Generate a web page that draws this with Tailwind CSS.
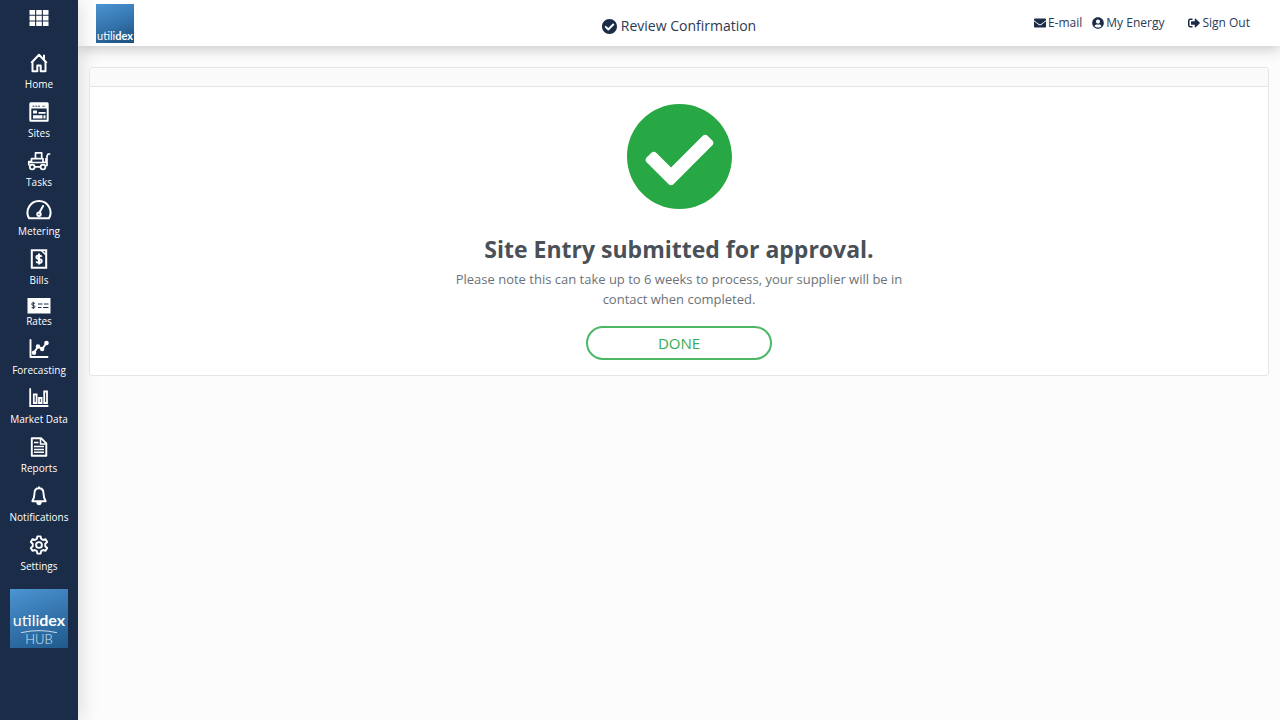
<!DOCTYPE html>
<html lang="en">
<head>
<meta charset="utf-8">
<meta name="viewport" content="width=device-width, initial-scale=1">
<title>Review Confirmation</title>
<script src="https://cdn.jsdelivr.net/npm/@tailwindcss/browser@4"></script>
</head>
<body class="flex min-h-screen bg-[#fcfcfc] font-['Open_Sans','Noto_Sans',sans-serif] text-[#1b2c48]">

<aside class="relative z-10 flex w-[78px] shrink-0 flex-col items-center bg-[#1b2c48] text-white shadow-[4px_0_18px_rgba(0,0,0,0.12)]">
  <button type="button" aria-label="Apps" class="mt-2.5 h-4 w-5">
    <svg viewBox="0 0 20 16" class="h-4 w-5" fill="currentColor"><path d="M.5 0h5.600v4.700H.5zM7.200 0h5.600v4.700H7.200zM13.900 0h5.600v4.700h-5.600zM.5 5.700h5.600v4.700H.5zM7.200 5.700h5.600v4.700H7.200zM13.900 5.700h5.600v4.700h-5.600zM.5 11.400h5.600V16H.5zM7.200 11.400h5.600V16H7.200zM13.900 11.400h5.600V16h-5.600z"/></svg>
  </button>
  <nav aria-label="Main" class="mt-[27px] flex flex-col items-center gap-[11px] text-[10px] leading-[14px]">
    <a href="#" class="flex flex-col items-center gap-1">
      <svg viewBox="0 0 24 20" class="h-5 w-6" fill="none" stroke="currentColor" stroke-width="2" stroke-linejoin="round"><path d="M5.500 8.500v9.800h4.800V12.500h3.400v5.800h4.800V8.500M4.200 10 12 1.700 19.800 10M17 1.800v5"/></svg>
      Home</a>
    <a href="#" class="flex flex-col items-center gap-1">
      <svg viewBox="0 0 24 20" class="h-5 w-6"><rect x="3.300" y="1.300" width="17.400" height="17.400" rx=".5" fill="none" stroke="currentColor" stroke-width="2"/><path d="M4 2h16v4.500H4zM6 8.500h4v3H6zM11.500 10h7v1.700h-7zM6 13.300h9.500v3.200H6zM16.500 13.300h2v3.200h-2z" fill="currentColor"/><path d="M5.500 4.200h8M15.500 4.200h3" stroke="#1b2c48" stroke-dasharray="2 .8" stroke-width=".9"/></svg>
      Sites</a>
    <a href="#" class="flex flex-col items-center gap-1">
      <svg viewBox="0 0 24 20" class="h-5 w-6" fill="none" stroke="currentColor" stroke-width="1.700" stroke-linejoin="round"><path d="M8.500 8V1.800h6.200V8M1.800 14.500V10.500H4.500V7.700H16v3.600H19V7M7.500 15.800h6M1.500 11.500H19M18.700 14.500h1.300V5.200L21 3h2.300"/><circle cx="5.200" cy="16" r="2.400"/><circle cx="16" cy="16" r="2.400"/></svg>
      Tasks</a>
    <a href="#" class="flex flex-col items-center gap-1">
      <svg viewBox="0 0 26 20" class="h-5 w-[26px]" fill="none" stroke="currentColor" stroke-width="2" stroke-linejoin="round" stroke-linecap="round"><path d="M3 18.300a11.500 11.500 0 1 1 20 0z"/><path d="m13.500 12.500 3.500-6.500"/><circle cx="13" cy="14.200" r="1.700"/></svg>
      Metering</a>
    <a href="#" class="flex flex-col items-center gap-1">
      <svg viewBox="0 0 24 20" class="h-5 w-6" fill="none" stroke="currentColor" stroke-width="2"><path d="M4.800 1.300h14.400v17.400H4.800z"/><path d="M14.500 1.500 19 6" stroke-width="1.500"/><path d="M14.700 7.700c-.5-1-1.500-1.300-2.700-1.300-1.500 0-2.600.6-2.600 1.800 0 2.700 5.300 1 5.300 3.700 0 1.200-1.200 1.900-2.700 1.900-1.300 0-2.300-.5-2.700-1.500M12 4.500v11"/></svg>
      Bills</a>
    <a href="#" class="flex flex-col items-center">
      <svg viewBox="0 0 24 16" class="h-4 w-6"><path d="M.5 0h23v15.500H.5z" fill="currentColor"/><path d="M7.900 5.800c-.3-.7-.9-.9-1.600-.9-.9 0-1.600.4-1.600 1.200 0 1.700 3.300.8 3.300 2.500 0 .8-.7 1.300-1.700 1.300-.8 0-1.500-.3-1.700-1M6.300 3.800v7.200M11 6h4.500M17 6h4.500M11 9.500h3.500M16 9.500h5.500" fill="none" stroke="#1b2c48" stroke-width="1"/></svg>
      Rates</a>
    <a href="#" class="flex flex-col items-center gap-1">
      <svg viewBox="0 0 24 20" class="h-5 w-6" fill="none" stroke="currentColor" stroke-width="1.900" stroke-linecap="round" stroke-linejoin="round"><path d="M3.500 1v17h17M7 13.700 11 7.500l4.200 2.500L19.500 4"/><g fill="currentColor" stroke="none"><circle cx="7" cy="13.700" r="2.200"/><circle cx="11" cy="7.500" r="2.200"/><circle cx="15.200" cy="10" r="2.200"/><circle cx="19.500" cy="4" r="2.300"/></g></svg>
      Forecasting</a>
    <a href="#" class="flex flex-col items-center gap-1">
      <svg viewBox="0 0 24 20" class="h-5 w-6" fill="none" stroke="currentColor" stroke-width="1.800" stroke-linecap="round"><path d="M3.200 1v17h17.500"/><path d="M6.800 6.500h2.800v8.500H6.800zM12 10h2.600v5H12zM17.200 3.500H20V15h-2.800z"/></svg>
      Market Data</a>
    <a href="#" class="flex flex-col items-center gap-1">
      <svg viewBox="0 0 24 20" class="h-5 w-6" fill="none" stroke="currentColor" stroke-width="1.900" stroke-linejoin="round"><path d="M4.800 1.300h9.500l5 5v12.400H4.800z"/><path d="M13.500 1.500V7h5.500M7 5.500h4.500M7 9.500h10M7 12.400h10M7 15.300h10" stroke-width="1.500"/></svg>
      Reports</a>
    <a href="#" class="flex flex-col items-center gap-1">
      <svg viewBox="0 0 24 20" class="h-5 w-6" fill="none" stroke="currentColor" stroke-width="1.900" stroke-linejoin="round"><path d="M12 2.300c-3.200 0-4.500 2.500-4.500 5 0 4-.8 5.700-2.200 8h13.400c-1.400-2.300-2.200-4-2.200-8 0-2.500-1.300-5-4.500-5zM12 .5v2"/><path d="M9.700 16.500h4.600a2.300 2.300 0 0 1-4.600 0z" fill="currentColor" stroke-width="1"/></svg>
      Notifications</a>
    <a href="#" class="flex flex-col items-center gap-1">
      <svg viewBox="1 1 22 22" class="h-5 w-6" fill="none" stroke="currentColor" stroke-width="2.100" stroke-linejoin="round"><path d="M9.600 5.300 10.200 2.500h3.600l.6 2.800 2.100 1.200 2.700-.9 1.800 3.100-2.100 1.900v2.800l2.100 1.900-1.800 3.100-2.700-.9-2.100 1.200-.6 2.800h-3.600l-.6-2.800-2.100-1.200-2.700.9L3 15.300l2.100-1.900v-2.800L3 8.700l1.800-3.100 2.700.9z"/><circle cx="12" cy="12" r="3.200"/></svg>
      Settings</a>
  </nav>
  <a href="#" aria-label="utilidex HUB" class="mt-4 mb-4 flex h-[59px] w-[58px] flex-col items-center bg-linear-160 from-[#4c94d3] via-[#3575ae] via-50% to-[#1f5a8c] pt-[21px] font-['Lato',sans-serif]">
    <span class="text-[16px] leading-[20px] font-normal">utili<b class="font-bold">dex</b></span>
    <svg viewBox="0 0 36 3" class="h-[3px] w-9 shrink-0" fill="none" stroke="#c5dcef"><path d="M0 2.700Q18-1.500 36 2.700"/></svg>
    <span class="text-[13px] leading-[12px] font-light text-[#d5e6f4]">HUB</span>
  </a>
</aside>

<div class="min-w-0 flex-1">
  <header class="grid h-[46px] grid-cols-[1fr_auto_1fr] bg-white shadow-[0_2px_14px_rgba(0,0,0,0.24)]">
    <a href="#" aria-label="utilidex" class="mt-1 ml-[18px] flex h-[39px] w-[38px] items-end justify-center bg-linear-160 from-[#4c94d3] via-[#3575ae] via-50% to-[#1c4f7e] font-['Lato',sans-serif] text-[11px] leading-[14px] text-white"><span>utili<b>dex</b></span></a>
    <h1 class="mt-[15px] flex items-start gap-1 text-[14px] leading-[22px] text-[#2c3b55]">
      <svg viewBox="8 8 496 496" class="mt-1 size-[15px] text-[#1b2c48]" fill="currentColor"><path d="M504 256c0 136.967-111.033 248-248 248S8 392.967 8 256 119.033 8 256 8s248 111.033 248 248zM227.314 387.314l184-184c6.248-6.248 6.248-16.379 0-22.627l-22.627-22.627c-6.248-6.249-16.379-6.249-22.628 0L216 308.118l-70.059-70.059c-6.248-6.248-16.379-6.248-22.628 0l-22.627 22.627c-6.248 6.248-6.248 16.379 0 22.627l104 104c6.249 6.249 16.379 6.249 22.628.001z"/></svg>
      Review Confirmation</h1>
    <nav aria-label="Account" class="mt-3.5 mr-[30px] flex items-start justify-end text-[12px] leading-[18px] whitespace-nowrap text-[#2c3b55]">
      <a href="#" class="mr-2.5 flex items-center gap-0.5"><svg viewBox="0 0 512 512" class="size-3 text-[#1b2c48]" fill="currentColor"><path d="M502.300 190.800c3.900-3.100 9.700-.2 9.700 4.700V400c0 26.500-21.500 48-48 48H48c-26.500 0-48-21.500-48-48V195.600c0-5 5.700-7.800 9.700-4.700 22.400 17.400 52.100 39.500 154.100 113.600 21.100 15.400 56.700 47.800 92.200 47.600 35.700.3 72-32.800 92.300-47.600 102-74.100 131.600-96.300 154-113.700zM256 320c23.200.4 56.600-29.200 73.400-41.400 132.700-96.300 142.800-104.700 173.400-128.700 5.800-4.500 9.200-11.500 9.200-18.900v-19c0-26.500-21.500-48-48-48H48c-26.500 0-48 21.500-48 48v19c0 7.400 3.400 14.300 9.200 18.900 30.600 23.900 40.700 32.400 173.400 128.700 16.800 12.200 50.200 41.800 73.400 41.400z"/></svg>E-mail</a>
      <a href="#" class="mr-6 flex items-center gap-0.5"><svg viewBox="0 0 496 512" class="size-3 text-[#1b2c48]" fill="currentColor"><path d="M248 8C111 8 0 119 0 256s111 248 248 248 248-111 248-248S385 8 248 8zm0 96c48.600 0 88 39.400 88 88s-39.400 88-88 88-88-39.400-88-88 39.400-88 88-88zm0 344c-58.700 0-111.300-26.600-146.500-68.200 18.800-35.400 55.600-59.800 98.500-59.800 2.400 0 4.800.4 7.100 1.100 13 4.200 26.600 6.900 40.900 6.900 14.300 0 28-2.700 40.900-6.900 2.300-.7 4.700-1.100 7.100-1.100 42.900 0 79.700 24.400 98.500 59.800C359.300 421.400 306.700 448 248 448z"/></svg>My Energy</a>
      <a href="#" class="flex items-center gap-0.5"><svg viewBox="0 0 512 512" class="size-3 text-[#1b2c48]" fill="currentColor"><path d="M497 273L329 441c-15 15-41 4.500-41-17v-96H152c-13.300 0-24-10.700-24-24v-96c0-13.300 10.700-24 24-24h136V88c0-21.400 25.900-32 41-17l168 168c9.300 9.400 9.300 24.600 0 34zM192 436v-40c0-6.600-5.400-12-12-12H96c-17.700 0-32-14.300-32-32V160c0-17.700 14.300-32 32-32h84c6.600 0 12-5.400 12-12V76c0-6.600-5.400-12-12-12H96c-53 0-96 43-96 96v192c0 53 43 96 96 96h84c6.600 0 12-5.400 12-12z"/></svg>Sign Out</a>
    </nav>
  </header>

  <main class="px-[11px] pt-[21px]">
    <section class="relative z-20 overflow-hidden rounded-[3px] border border-[#e4e5e6] bg-white">
      <div class="h-[19px] border-b border-[#e4e5e6] bg-[#fafafa]"></div>
      <div class="flex flex-col items-center px-4 pt-[17px] pb-[15px] text-center">
        <svg viewBox="8 8 496 496" class="size-[105px] text-[#28a745]" fill="currentColor" role="img" aria-label="Success"><path d="M504 256c0 136.967-111.033 248-248 248S8 392.967 8 256 119.033 8 256 8s248 111.033 248 248zM227.314 387.314l184-184c6.248-6.248 6.248-16.379 0-22.627l-22.627-22.627c-6.248-6.249-16.379-6.249-22.628 0L216 308.118l-70.059-70.059c-6.248-6.248-16.379-6.248-22.628 0l-22.627 22.627c-6.248 6.248-6.248 16.379 0 22.627l104 104c6.249 6.249 16.379 6.249 22.628.001z"/></svg>
        <h2 class="mt-[25px] text-[23px] leading-[30px] font-bold text-[#495057]">Site Entry submitted for approval.</h2>
        <p class="mt-[5px] max-w-[460px] text-[13px] leading-5 text-[#6c7278]">Please note this can take up to 6 weeks to process, your supplier will be in contact when completed.</p>
        <button type="button" class="mt-[17px] h-[34px] w-[186px] rounded-full border-2 border-[#4cb866] text-[15px] leading-[20px] text-[#35ad50]">DONE</button>
      </div>
    </section>
  </main>
</div>
</body>
</html>
